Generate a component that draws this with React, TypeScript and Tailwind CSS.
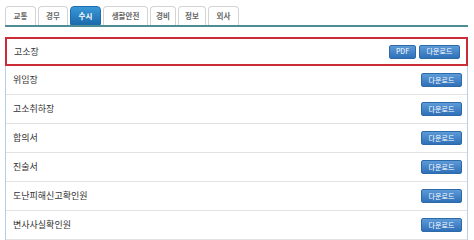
const tabs = ['교통', '경무', '수시', '생활안전', '경비', '정보', '외사']
const tabWidths = ['w-[31px]', 'w-[30px]', 'w-[31px]', 'w-[45px]', 'w-[26px]', 'w-[28px]', 'w-[31px]']

const rows = [
  { name: '고소장', pdf: true },
  { name: '위임장' },
  { name: '고소취하장' },
  { name: '합의서' },
  { name: '진술서' },
  { name: '도난피해신고확인원' },
  { name: '변사사실확인원' },
]

function Btn({ label, w }: { label: string; w: string }) {
  return (
    <span
      className={`${w} h-[14px] flex items-center justify-center rounded-[2px] border border-[#2d6aa8] bg-gradient-to-b from-[#5c9ad8] to-[#2f70b8] text-white text-[7px] leading-none`}
    >
      {label}
    </span>
  )
}

export default function App() {
  return (
    <div className="w-[474px] h-[240px] bg-white overflow-hidden font-['Noto_Sans_CJK_KR','Liberation_Sans',sans-serif] text-[#333]">
      <div className="px-[5px] pt-[6px]">
        <div className="flex gap-[2px] border-b-2 border-[#4f8d96] w-[463px]">
          {tabs.map((t, i) => (
            <div
              key={t}
              className={`${tabWidths[i]} h-[19px] flex items-center justify-center rounded-t-[4px] text-[7.5px] font-bold leading-none ${
                t === '수시'
                  ? 'bg-gradient-to-b from-[#3a98d6] to-[#1d6cae] text-white border border-[#1d6cae]'
                  : 'bg-white text-[#666] border border-b-0 border-[#d4d4d4]'
              }`}
            >
              {t}
            </div>
          ))}
        </div>
      </div>
      <div className="mt-[10px] mx-[5px] w-[463px] border-x border-[#b5d0e4]">
        {rows.map((r, i) => (
          <div
            key={r.name}
            className={`flex items-center h-[29px] pr-[5px] ${
              i === 0
                ? 'border-2 border-[#cc2c36] -mx-px pl-[7px] pr-[6px]'
                : 'border-b border-[#e2e2e2] pl-[7px]'
            }`}
          >
            <span className="flex-1 text-[9px]">{r.name}</span>
            <div className="flex gap-[3px]">
              {r.pdf && <Btn label="PDF" w="w-[27px]" />}
              <Btn label="다운로드" w="w-[41px]" />
            </div>
          </div>
        ))}
      </div>
    </div>
  )
}
